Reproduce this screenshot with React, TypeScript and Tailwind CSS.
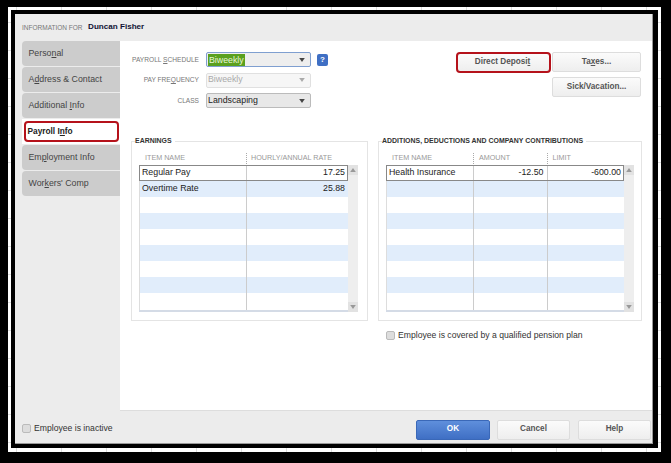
import type { ReactNode } from "react";

const tabs: { before: string; key: string; after: string }[] = [
  { before: "Perso", key: "n", after: "al" },
  { before: "A", key: "d", after: "dress & Contact" },
  { before: "Additional ", key: "I", after: "nfo" },
  { before: "Payroll I", key: "n", after: "fo" },
  { before: "Em", key: "p", after: "loyment Info" },
  { before: "Wor", key: "k", after: "ers' Comp" },
];

const Arrow = ({ up, color = "#555" }: { up?: boolean; color?: string }) => (
  <svg width="6" height="4" viewBox="0 0 7 5">
    <polygon points={up ? "0,5 7,5 3.5,0" : "0,0 7,0 3.5,5"} fill={color} />
  </svg>
);

const Select = ({ children, disabled, focus }: { children: ReactNode; disabled?: boolean; focus?: boolean }) => (
  <div
    className={`flex h-[15px] w-[105px] items-center justify-between rounded-[2px] border pl-[1px] pr-[5px] text-[8.8px] ${
      focus
        ? "border-[#7f9fd0] bg-[#eeeeee] text-[#e8f5d8]"
        : disabled
          ? "border-[#e0e0e0] bg-[#f6f6f6] text-[#aaaaaa]"
          : "border-[#bbbbbb] bg-[#e8e8e8] text-[#222222]"
    }`}
  >
    {children}
    <Arrow color={disabled ? "#aaaaaa" : "#444444"} />
  </div>
);

const Label = ({ children }: { children: ReactNode }) => (
  <div className="whitespace-nowrap text-right text-[6.6px] text-[#777777]">{children}</div>
);

const Btn = ({ children, w }: { children: ReactNode; w: string }) => (
  <div
    className={`${w} flex h-[20px] items-center justify-center rounded-[2px] border border-[#dddddd] bg-gradient-to-b from-[#fbfbfb] to-[#eeeeee] text-[8.2px] font-bold text-[#555555]`}
  >
    {children}
  </div>
);

const Scrollbar = () => (
  <div className="flex w-[10px] flex-col items-center justify-between bg-[#eeeeee]">
    <div className="flex h-[10px] w-full items-center justify-center bg-[#e2e2e2]">
      <Arrow up color="#999999" />
    </div>
    <div className="flex h-[10px] w-full items-center justify-center bg-[#e2e2e2]">
      <Arrow color="#999999" />
    </div>
  </div>
);

type Props = {
  legend: string;
  box: string;
  cols: string;
  gutter: string;
  headers: string[];
  first: ReactNode[];
  second?: ReactNode[];
};

const Grid = ({ legend, box, cols, gutter, headers, first, second }: Props) => {
  const rows = Array.from({ length: 9 }, (_, i) => i);
  return (
    <fieldset className={`${box} h-[185px] border border-[#e4e4e4] pl-[7px]`}>
      <legend className="-ml-[4px] pr-[3px] text-[6.95px] font-bold leading-[10px] text-[#333333]">{legend}</legend>
      <div className={`grid ${cols} h-[19px] items-end pb-[1px] pr-[10px]`}>
        {headers.map((h, i) => (
          <div key={h} className={`text-[7.2px] text-[#999999] ${i === 0 ? "pl-[6px]" : `border-l border-dotted border-[#aaaaaa] ${gutter}`}`}>
            {h}
          </div>
        ))}
      </div>
      <div className="flex h-[147px]">
        <div className="flex-1 border-b-2 border-[#d4dbe6]">
          {rows.map((r) => {
            const cells = r === 0 ? first : r === 1 && second ? second : headers.map(() => "");
            return (
              <div
                key={r}
                className={`grid ${cols} ${r === 8 ? "h-[17px]" : "h-[16px]"} text-[8.8px] leading-[14px] text-[#222222] ${r % 2 === 1 ? "bg-[#e1edfb]" : "bg-white"} ${
                  r === 0 ? "outline outline-1 -outline-offset-1 outline-[#888888]" : ""
                }`}
              >
                {cells.map((c, i) => (
                  <div key={i} className={`border-l ${i > 0 ? "border-[#cccccc] pr-[3px] text-right" : "border-[#dddddd] pl-[2px]"}`}>
                    {c}
                  </div>
                ))}
              </div>
            );
          })}
        </div>
        <Scrollbar />
      </div>
    </fieldset>
  );
};

const Check = ({ label }: { label: string }) => (
  <div className="flex items-center gap-[3px] text-[8.65px] text-[#333333]">
    <div className="h-[9px] w-[9px] rounded-[2px] border border-[#bbbbbb] bg-[#dddddd]" />
    {label}
  </div>
);

export default function App() {
  return (
    <div className="h-[463px] w-[671px] overflow-hidden bg-black pb-[11px] pl-[8px] pr-[10px] pt-[7px] font-['Liberation_Sans',sans-serif]">
      <div className="h-full bg-white bg-[linear-gradient(#dddddd_1px,transparent_1px),linear-gradient(90deg,#dddddd_1px,transparent_1px)] bg-[size:45px_28px] bg-[position:8px_15px] pb-[4px] pl-[3px] pr-[3px] pt-[3px]">
        <div className="flex h-full flex-col border-b-[4px] border-l-[4px] border-r-[5px] border-t-[4px] border-black bg-[#ececec] shadow-[inset_-1px_-1px_0_#999999]">
          <div className="flex h-[27px] items-center gap-[5.5px] pl-[7px]">
            <span className="text-[6.5px] text-[#777777]">INFORMATION FOR</span>
            <span className="text-[8.1px] font-bold text-[#111133]">Duncan Fisher</span>
          </div>

          <div className="flex h-[370px]">
            <div className="w-[105px] pl-[6.5px]">
              {tabs.map((t, i) =>
                i === 3 ? (
                  <div key={i} className="mb-[1.5px] flex h-[24.5px] items-center bg-white pl-[2px]">
                    <div className="flex h-[20.5px] w-[95.5px] items-center rounded-[4px] border-2 border-[#b5121b] pl-[2px] text-[8.3px] font-bold text-[#222222]">
                      <span>
                        {t.before}
                        <u>{t.key}</u>
                        {t.after}
                      </span>
                    </div>
                  </div>
                ) : (
                  <div key={i} className="mb-[1.5px] flex h-[24.5px] items-center rounded-l-[4px] bg-[#cccccc] pl-[7px] text-[8.8px] text-[#444444]">
                    <span>
                      {t.before}
                      <u>{t.key}</u>
                      {t.after}
                    </span>
                  </div>
                ),
              )}
            </div>

            <div className="w-[532px] border-b border-[#dddddd] bg-white">
              <div className="flex h-[95px] justify-between pl-[12px] pr-[11px] pt-[11px]">
                <div className="grid h-fit grid-cols-[67px_105px_auto] items-center gap-x-[7px] gap-y-[5.5px]">
                  <Label>
                    PAYROLL <u>S</u>CHEDULE
                  </Label>
                  <Select focus>
                    <span className="bg-[#5aa01e] px-[1px] leading-[12px]">Biweekly</span>
                  </Select>
                  <div className="-ml-[1px] flex h-[12px] w-[11px] items-center justify-center rounded-[2px] bg-[#3f6fc4] text-[8px] font-bold text-white">?</div>
                  <Label>
                    PAY FRE<u>Q</u>UENCY
                  </Label>
                  <Select disabled>Biweekly</Select>
                  <div />
                  <Label>CLASS</Label>
                  <Select>Landscaping</Select>
                </div>

                <div className="flex gap-[1px]">
                  <div className="flex h-[21px] w-[95px] items-center justify-center rounded-[4px] border-2 border-[#b5121b] bg-gradient-to-b from-[#fbfbfb] to-[#eeeeee] pr-[2px] text-[8.2px] font-bold text-[#555555]">
                    <span>
                      Direct Deposi<u>t</u>
                    </span>
                  </div>
                  <div className="flex flex-col gap-[5px]">
                    <Btn w="w-[89px]">
                      <span>
                        Ta<u>x</u>es...
                      </span>
                    </Btn>
                    <Btn w="w-[89px]">Sick/Vacation...</Btn>
                  </div>
                </div>
              </div>

              <div className="flex gap-[10px] pl-[11px]">
                <Grid
                  legend="EARNINGS"
                  box="w-[237px] pr-[9px]"
                  cols="grid-cols-[107px_1fr]"
                  gutter="pl-[4px]"
                  headers={["ITEM NAME", "HOURLY/ANNUAL RATE"]}
                  first={["Regular Pay", "17.25"]}
                  second={["Overtime Rate", "25.88"]}
                />
                <Grid
                  legend="ADDITIONS, DEDUCTIONS AND COMPANY CONTRIBUTIONS"
                  box="w-[264px] pr-[7px]"
                  cols="grid-cols-[87px_73.5px_1fr]"
                  gutter="pl-[5px]"
                  headers={["ITEM NAME", "AMOUNT", "LIMIT"]}
                  first={["Health Insurance", "-12.50", "-600.00"]}
                />
              </div>

              <div className="ml-[266px] mt-[8px]">
                <Check label="Employee is covered by a qualified pension plan" />
              </div>
            </div>
          </div>

          <div className="flex flex-1 items-center justify-between pl-[7px] pr-[2px] pt-[2px]">
            <Check label="Employee is inactive" />
            <div className="mt-[2px] flex gap-[7px]">
              <div className="flex h-[20px] w-[74px] items-center justify-center rounded-[2px] border border-[#3a68b8] bg-gradient-to-b from-[#5f8fdc] to-[#3f6fc4] text-[8.2px] font-bold text-white">
                OK
              </div>
              <Btn w="w-[73px]">Cancel</Btn>
              <Btn w="ml-[1px] w-[73px]">Help</Btn>
            </div>
          </div>
        </div>
      </div>
    </div>
  );
}
